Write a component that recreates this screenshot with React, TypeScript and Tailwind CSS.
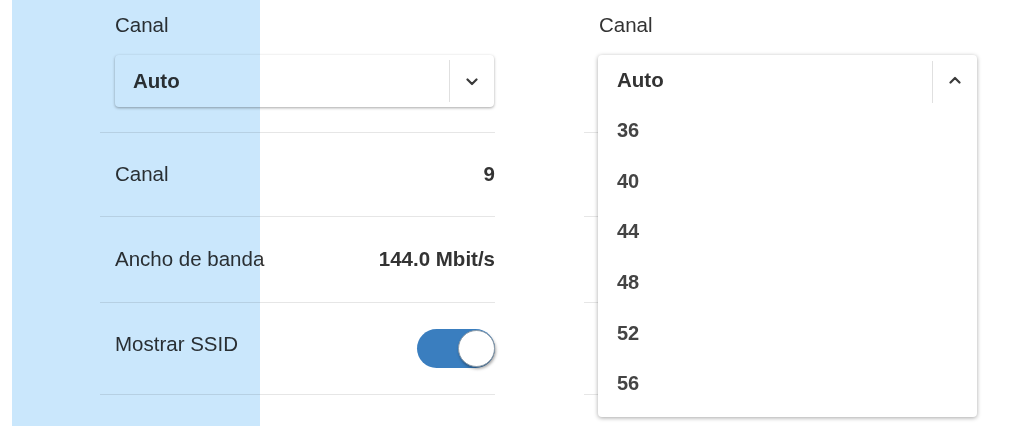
import React from "react";

const font = { fontFamily: '"Liberation Sans", Arial, sans-serif' };

function Chevron({ up }: { up?: boolean }) {
  return (
    <svg width="12" height="8" viewBox="0 0 12 8" className="block">
      <path
        d={up ? "M1.5 6.5 L6 2 L10.5 6.5" : "M1.5 1.5 L6 6 L10.5 1.5"}
        fill="none"
        stroke="#3a3a3a"
        strokeWidth="2.2"
        strokeLinecap="round"
        strokeLinejoin="round"
      />
    </svg>
  );
}

function Rows({ open }: { open?: boolean }) {
  return (
    <div className={open ? "relative w-[390px]" : "relative w-[395px]"}>
      <div className="h-[133px] border-b border-[#e6e6e6] pl-[15px]">
        <div className="pt-[12px] h-[43px] leading-[26px] text-[20.5px] text-[#333]">Canal</div>
        {!open && (
          <div className="mt-[12px] h-[52px] w-[379px] flex items-center rounded-[4px] bg-white shadow-[0_1px_3px_rgba(0,0,0,0.35)]">
            <div className="flex-1 pl-[18px] text-[20.5px] font-bold text-[#333]">Auto</div>
            <div className="w-px h-[42px] bg-[#e0e0e0]" />
            <div className="w-[44px] flex justify-center pt-[1px]">
              <Chevron />
            </div>
          </div>
        )}
      </div>
      <div className="h-[84px] border-b border-[#e6e6e6] pl-[15px] flex items-center justify-between text-[20.5px] text-[#333]">
        {!open && (
          <>
            <span>Canal</span>
            <span className="font-bold">9</span>
          </>
        )}
      </div>
      <div className="h-[86px] border-b border-[#e6e6e6] pl-[15px] flex items-center justify-between text-[20.5px] text-[#333]">
        {!open && (
          <>
            <span>Ancho de banda</span>
            <span className="font-bold">144.0 Mbit/s</span>
          </>
        )}
      </div>
      <div className="h-[92px] border-b border-[#e6e6e6] pl-[15px] flex items-center justify-between text-[20.5px] text-[#333]">
        {!open && (
          <>
            <span className="-mt-[8px]">Mostrar SSID</span>
            <div className="relative w-[78px] h-[39px] rounded-full bg-[#3a7ebf]">
              <div className="absolute right-0 top-[1px] w-[37px] h-[37px] rounded-full bg-white border border-[#8a9aa8] shadow-[1px_2px_3px_rgba(0,0,0,0.35)]" />
            </div>
          </>
        )}
      </div>
      {open && (
        <div className="absolute left-[14px] top-[55px] w-[379px] rounded-[4px] bg-white shadow-[0_1px_4px_rgba(0,0,0,0.35)] pb-[8px]">
          <div className="h-[50px] flex items-center">
            <div className="flex-1 pl-[19px] text-[20.5px] font-bold text-[#333] pt-[1px]">Auto</div>
            <div className="w-px h-[42px] bg-[#e0e0e0] mt-[4px]" />
            <div className="w-[44px] flex justify-center">
              <Chevron up />
            </div>
          </div>
          {["36", "40", "44", "48", "52", "56"].map((v) => (
            <div key={v} className="h-[50.6px] flex items-center pl-[19px] text-[20px] font-bold text-[#444]">
              {v}
            </div>
          ))}
        </div>
      )}
    </div>
  );
}

export default function App() {
  return (
    <div className="relative w-[1024px] h-[426px] bg-white overflow-hidden" style={font}>
      <div className="flex">
        <div className="ml-[100px]">
          <Rows />
        </div>
        <div className="ml-[89px]">
          <Rows open />
        </div>
      </div>
      <div className="absolute left-[12px] top-0 w-[248px] h-full bg-[#cae7fc] mix-blend-multiply pointer-events-none" />
    </div>
  );
}
